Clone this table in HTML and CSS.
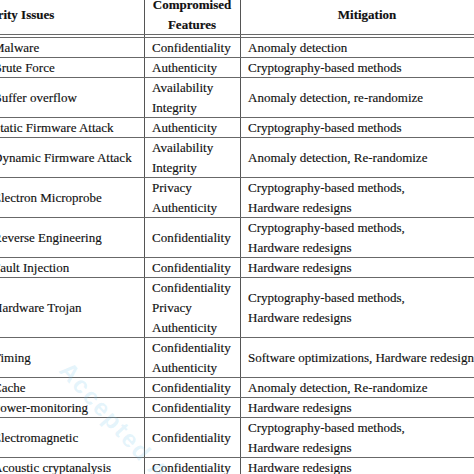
FILE: index.html
```html
<!DOCTYPE html>
<html lang="en">
<head>
<meta charset="utf-8">
<title>Security issues table</title>
<link rel="stylesheet" href="styles.css">
</head>
<body>
<div class="page">
  <div class="table">
    <div class="cell head c1">Security Issues</div>
    <div class="cell head c2">Compromised<br>Features</div>
    <div class="cell head c3">Mitigation</div>

    <div class="sep c1"></div>
    <div class="sep c2"></div>
    <div class="sep c3"></div>

    <div class="cell c1">Malware</div>
    <div class="cell c2">Confidentiality</div>
    <div class="cell c3">Anomaly detection</div>

    <div class="cell c1">Brute Force</div>
    <div class="cell c2">Authenticity</div>
    <div class="cell c3">Cryptography-based methods</div>

    <div class="cell c1">Buffer overflow</div>
    <div class="cell c2">Availability<br>Integrity</div>
    <div class="cell c3">Anomaly detection, re-randomize</div>

    <div class="cell c1">Static Firmware Attack</div>
    <div class="cell c2">Authenticity</div>
    <div class="cell c3">Cryptography-based methods</div>

    <div class="cell c1">Dynamic Firmware Attack</div>
    <div class="cell c2">Availability<br>Integrity</div>
    <div class="cell c3">Anomaly detection, Re-randomize</div>

    <div class="cell c1">Electron Microprobe</div>
    <div class="cell c2">Privacy<br>Authenticity</div>
    <div class="cell c3">Cryptography-based methods,<br>Hardware redesigns</div>

    <div class="cell c1">Reverse Engineering</div>
    <div class="cell c2">Confidentiality</div>
    <div class="cell c3">Cryptography-based methods,<br>Hardware redesigns</div>

    <div class="cell c1">Fault Injection</div>
    <div class="cell c2">Confidentiality</div>
    <div class="cell c3">Hardware redesigns</div>

    <div class="cell c1">Hardware Trojan</div>
    <div class="cell c2">Confidentiality<br>Privacy<br>Authenticity</div>
    <div class="cell c3">Cryptography-based methods,<br>Hardware redesigns</div>

    <div class="cell c1">Timing</div>
    <div class="cell c2">Confidentiality<br>Authenticity</div>
    <div class="cell c3">Software optimizations, Hardware redesigns</div>

    <div class="cell c1">Cache</div>
    <div class="cell c2">Confidentiality</div>
    <div class="cell c3">Anomaly detection, Re-randomize</div>

    <div class="cell c1">Power-monitoring</div>
    <div class="cell c2">Confidentiality</div>
    <div class="cell c3">Hardware redesigns</div>

    <div class="cell c1">Electromagnetic</div>
    <div class="cell c2">Confidentiality</div>
    <div class="cell c3">Cryptography-based methods,<br>Hardware redesigns</div>

    <div class="cell c1">Acoustic cryptanalysis</div>
    <div class="cell c2">Confidentiality</div>
    <div class="cell c3">Hardware redesigns</div>
  </div>
  <div class="watermark">Accepted Article</div>
</div>
</body>
</html>
```

FILE: styles.css
```css
html, body {
  margin: 0;
  padding: 0;
  overflow: hidden;
  background: #ffffff;
}

.page {
  position: relative;
  width: 474px;
  height: 474px;
  overflow: hidden;
}

.table {
  display: grid;
  grid-template-columns: 262px 96px 254px;
  margin: -5px 0 0 -118px;
  width: 612px;
  font-family: "Liberation Serif", "Times New Roman", serif;
  font-size: 13px;
  line-height: 20px;
  color: #111111;
  -webkit-text-stroke: 0.15px #111111;
}

.cell {
  display: flex;
  align-items: center;
  white-space: nowrap;
  padding: 0 8px;
  box-shadow: inset 0 -1px 0 #686868;
}

.cell.c1 {
  padding-left: 111px;
}

.cell.c2,
.cell.c3,
.sep.c2,
.sep.c3 {
  box-shadow: inset 0 -1px 0 #686868, inset 1px 0 0 #555555;
}

.sep {
  height: 3px;
  box-shadow: inset 0 -1px 0 #686868;
}

.head {
  font-weight: bold;
  justify-content: center;
  text-align: center;
  height: 40px;
}

.cell.head.c1 {
  padding-left: 8px;
}

.watermark {
  position: absolute;
  left: 64px;
  top: 352px;
  transform: rotate(48deg);
  transform-origin: left center;
  font-family: "Liberation Sans", Arial, sans-serif;
  font-weight: bold;
  font-size: 24px;
  letter-spacing: 2px;
  color: rgba(120, 200, 235, 0.2);
  white-space: nowrap;
  pointer-events: none;
}
```
